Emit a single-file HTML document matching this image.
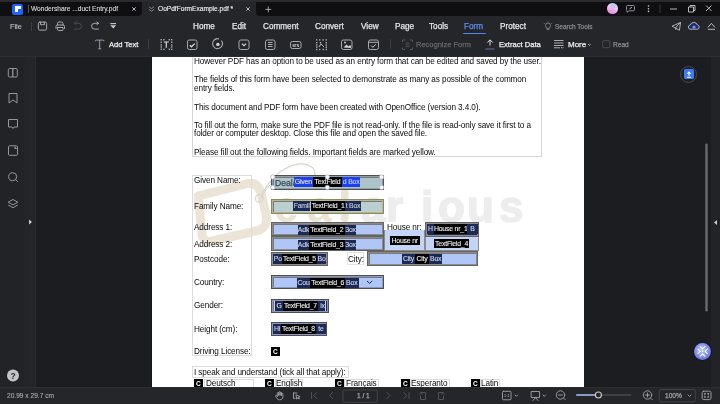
<!DOCTYPE html>
<html><head><meta charset="utf-8"><style>
*{margin:0;padding:0;box-sizing:border-box}
html,body{width:720px;height:404px;overflow:hidden;background:#1b1c20;font-family:"Liberation Sans",sans-serif;position:relative}
.a{position:absolute}
.ui{color:#d8d9dc;white-space:nowrap;line-height:1;will-change:transform;-webkit-text-stroke:0.25px currentColor}
svg{position:absolute;overflow:visible}
.doc{color:#111;font-size:8px;white-space:nowrap;line-height:1;will-change:transform}
</style></head><body>

<!-- title bar -->
<div class="a" style="left:0;top:0;width:720px;height:57px;background:#25262a"></div>
<div class="a" style="left:0;top:0;width:720px;height:1.5px;background:#2b2b2e"></div>
<div class="a" style="left:0;top:1.5px;width:141.5px;height:14.8px;background:#0f0f11;border-radius:0 0 4px 0"></div>
<div class="a" style="left:256px;top:1.5px;width:464px;height:14.8px;background:#0f0f11;border-radius:0 0 0 4px"></div>
<div class="a" style="left:0;top:56px;width:720px;height:1px;background:#2b2c30"></div>

<!-- sidebar -->
<div class="a" style="left:0;top:57px;width:36px;height:330px;background:#222327"></div>
<div class="a" style="left:25px;top:57px;width:10px;height:330px;background:#242529"></div>
<div class="a" style="left:35px;top:57px;width:1px;height:330px;background:#2b2c30"></div>
<!-- doc bg -->
<div class="a" style="left:36px;top:57px;width:675px;height:330px;background:#1c1d21"></div>
<div class="a" style="left:151px;top:57px;width:1px;height:330px;background:#151619"></div>
<!-- right strip -->
<div class="a" style="left:711px;top:57px;width:9px;height:330px;background:#222327"></div>
<!-- page -->
<div class="a" style="left:152px;top:57px;width:432px;height:330px;background:#fff"></div>
<!-- document -->
<div class="a" style="left:152px;top:57px;width:432px;height:330px;overflow:hidden">
<div class="a" style="left:-152px;top:-57px;width:720px;height:404px">
<div class="a" style="left:192px;top:40px;width:350px;height:117px;border:1px solid #d6d6d6"></div>
<div class="a doc" style="left:194.2px;top:57.81px;font-size:8.2px;color:#0a0a0a;letter-spacing:-0.1px;">However PDF has an option to be used as an entry form that can be edited and saved by the user.</div>
<div class="a doc" style="left:194.2px;top:76.06px;font-size:8.2px;color:#0a0a0a;letter-spacing:-0.1px;">The fields of this form have been selected to demonstrate as many as possible of the common</div>
<div class="a doc" style="left:194.2px;top:84.81px;font-size:8.2px;color:#0a0a0a;letter-spacing:-0.1px;">entry fields.</div>
<div class="a doc" style="left:194.2px;top:103.56px;font-size:8.2px;color:#0a0a0a;letter-spacing:-0.1px;">This document and PDF form have been created with OpenOffice (version 3.4.0).</div>
<div class="a doc" style="left:194.2px;top:121.56px;font-size:8.2px;color:#0a0a0a;letter-spacing:-0.1px;">To fill out the form, make sure the PDF file is not read-only. If the file is read-only save it first to a</div>
<div class="a doc" style="left:194.2px;top:130.31px;font-size:8.2px;color:#0a0a0a;letter-spacing:-0.1px;">folder or computer desktop. Close this file and open the saved file.</div>
<div class="a doc" style="left:194.2px;top:149.06px;font-size:8.2px;color:#0a0a0a;letter-spacing:-0.1px;">Please fill out the following fields. Important fields are marked yellow.</div>
<svg style="left:0;top:0" width="720" height="404">
 <g fill="none" stroke="#ece5d7" stroke-linejoin="round">
  <path d="M198 196 L246 184 Q257 181 261 193 L266 214 Q269 228 256 231 L212 241 Q203 243 202 234 Z" stroke-width="9"/>
 </g>
 <circle cx="259.3" cy="198.4" r="3.8" fill="none" stroke="#d8d4cc" stroke-width="1.2"/>
 <path d="M261 196 Q268 182 280 172 Q300 158 313 168 Q318 174 311 182" stroke="#d8d4cc" stroke-width="1.1" fill="none"/>
 <path d="M258 202 Q266 188 276 178" stroke="#d8d4cc" stroke-width="1" fill="none"/>
 <text x="274" y="222" font-family="Liberation Sans" font-weight="bold" font-size="44" fill="#ebe3d3">e</text>
 <text x="307" y="222" font-family="Liberation Sans" font-weight="bold" font-size="44" fill="#ebe3d3">a</text>
 <rect x="341" y="189" width="7.5" height="33" rx="3.5" fill="#ebe3d3"/>
 <text x="361" y="222" font-family="Liberation Sans" font-weight="bold" font-size="44" fill="#ededed" stroke="#ededed" stroke-width="1.5">a</text>
 <text x="386" y="222" font-family="Liberation Sans" font-weight="bold" font-size="44" fill="#ededed" stroke="#ededed" stroke-width="1.5">r</text>
 <text x="421" y="222" font-family="Liberation Sans" font-weight="bold" font-size="44" fill="#ededed" stroke="#ededed" stroke-width="1.5">i</text>
 <text x="438" y="222" font-family="Liberation Sans" font-weight="bold" font-size="44" fill="#ededed" stroke="#ededed" stroke-width="1.5">o</text>
 <text x="467" y="222" font-family="Liberation Sans" font-weight="bold" font-size="44" fill="#ededed" stroke="#ededed" stroke-width="1.5">u</text>
 <text x="499" y="222" font-family="Liberation Sans" font-weight="bold" font-size="44" fill="#ededed" stroke="#ededed" stroke-width="1.5">s</text>
</svg>
<div class="a" style="left:192px;top:175px;width:60px;height:181px;border:1px solid #dcdcdc"></div>
<div class="a doc" style="left:194.2px;top:176.86px;font-size:8.2px;color:#0a0a0a;letter-spacing:-0.1px;">Given Name:</div>
<div class="a doc" style="left:194.2px;top:203.26px;font-size:8.2px;color:#0a0a0a;letter-spacing:-0.1px;">Family Name:</div>
<div class="a doc" style="left:194.2px;top:223.66px;font-size:8.2px;color:#0a0a0a;letter-spacing:-0.1px;">Address 1:</div>
<div class="a doc" style="left:194.2px;top:240.66px;font-size:8.2px;color:#0a0a0a;letter-spacing:-0.1px;">Address 2:</div>
<div class="a doc" style="left:194.2px;top:255.56px;font-size:8.2px;color:#0a0a0a;letter-spacing:-0.1px;">Postcode:</div>
<div class="a doc" style="left:194.2px;top:278.66px;font-size:8.2px;color:#0a0a0a;letter-spacing:-0.1px;">Country:</div>
<div class="a doc" style="left:194.2px;top:302.26px;font-size:8.2px;color:#0a0a0a;letter-spacing:-0.1px;">Gender:</div>
<div class="a doc" style="left:194.2px;top:325.66px;font-size:8.2px;color:#0a0a0a;letter-spacing:-0.1px;">Height (cm):</div>
<div class="a doc" style="left:194.2px;top:348.26px;font-size:8.2px;color:#0a0a0a;letter-spacing:-0.1px;">Driving License:</div>
<div class="a" style="left:192px;top:366px;width:156.5px;height:12px;border:1px solid #dcdcdc"></div>
<div class="a doc" style="left:194.2px;top:368.66px;font-size:8.2px;color:#0a0a0a;letter-spacing:-0.1px;">I speak and understand (tick all that apply):</div>
<div class="a" style="left:194.4px;top:379px;width:9px;height:9px;background:#000"></div>
<div class="a doc" style="left:196.4px;top:380.6px;font-size:6.6px;font-weight:bold;color:#fff">C</div>
<div class="a" style="left:204.2px;top:378.5px;width:50.2px;height:10px;border:1px solid #dcdcdc"></div>
<div class="a doc" style="left:205.7px;top:380.26px;font-size:8.2px;color:#0a0a0a;letter-spacing:-0.1px;">Deutsch</div>
<div class="a" style="left:264.8px;top:379px;width:9px;height:9px;background:#000"></div>
<div class="a doc" style="left:266.8px;top:380.6px;font-size:6.6px;font-weight:bold;color:#fff">C</div>
<div class="a" style="left:274.6px;top:378.5px;width:28.7px;height:10px;border:1px solid #dcdcdc"></div>
<div class="a doc" style="left:276.1px;top:380.26px;font-size:8.2px;color:#0a0a0a;letter-spacing:-0.1px;">English</div>
<div class="a" style="left:335.3px;top:379px;width:9px;height:9px;background:#000"></div>
<div class="a doc" style="left:337.3px;top:380.6px;font-size:6.6px;font-weight:bold;color:#fff">C</div>
<div class="a" style="left:344.4px;top:378.5px;width:34.5px;height:10px;border:1px solid #dcdcdc"></div>
<div class="a doc" style="left:345.9px;top:380.26px;font-size:8.2px;color:#0a0a0a;letter-spacing:-0.1px;">Fran&ccedil;ais</div>
<div class="a" style="left:400.5px;top:379px;width:9px;height:9px;background:#000"></div>
<div class="a doc" style="left:402.5px;top:380.6px;font-size:6.6px;font-weight:bold;color:#fff">C</div>
<div class="a" style="left:409.8px;top:378.5px;width:40.2px;height:10px;border:1px solid #dcdcdc"></div>
<div class="a doc" style="left:411.3px;top:380.26px;font-size:8.2px;color:#0a0a0a;letter-spacing:-0.1px;">Esperanto</div>
<div class="a" style="left:471.4px;top:379px;width:9px;height:9px;background:#000"></div>
<div class="a doc" style="left:473.4px;top:380.6px;font-size:6.6px;font-weight:bold;color:#fff">C</div>
<div class="a" style="left:479.8px;top:378.5px;width:20.7px;height:10px;border:1px solid #dcdcdc"></div>
<div class="a doc" style="left:481.3px;top:380.26px;font-size:8.2px;color:#0a0a0a;letter-spacing:-0.1px;">Latin</div>
<div class="a" style="left:270.8px;top:347px;width:9.4px;height:9px;background:#000"></div>
<div class="a doc" style="left:273px;top:348.6px;font-size:6.6px;font-weight:bold;color:#fff">C</div>
<div class="a" style="left:270.6px;top:175.2px;width:113.4px;height:14.4px;background:#aec4cb;border:1px solid #505050;box-shadow:inset 0 0 0 1px #8ea0a8,inset 1px 1px 0 1px #7a7a7a"></div>
<div class="a doc" style="left:275px;top:179.22px;font-size:8.6px;color:#3a4a50;-webkit-text-stroke:0.25px #3a4a50">Deala</div>
<div class="a doc" style="left:294.2px;top:177px;width:18.6px;height:10px;background:#1c3ff0;color:#e8ecff;font-size:6.9px;line-height:10px;overflow:hidden;text-align:center;letter-spacing:-0.2px;-webkit-text-stroke:0.1px #e8ecff"><span style="display:inline-block;margin:0 -20px">Given</span></div>
<div class="a doc" style="left:312.8px;top:177px;width:28.9px;height:10px;background:#000;color:#f2f2f2;font-size:6.9px;line-height:10px;overflow:hidden;text-align:center;letter-spacing:-0.2px;-webkit-text-stroke:0.1px #f2f2f2"><span style="display:inline-block;margin:0 -20px">TextField</span></div>
<div class="a doc" style="left:341.7px;top:177px;width:18.3px;height:10px;background:#1c3ff0;color:#c8d0ff;font-size:6.9px;line-height:10px;overflow:hidden;text-align:center;letter-spacing:-0.2px;-webkit-text-stroke:0.1px #c8d0ff"><span style="display:inline-block;margin:0 -20px">d Box</span></div>
<svg style="left:0;top:0" width="720" height="404"><circle cx="272.8" cy="177" r="2.2" fill="#fbfcff" stroke="#9fb0d0" stroke-width="0.7"/><circle cx="272.8" cy="187.4" r="2.2" fill="#fbfcff" stroke="#9fb0d0" stroke-width="0.7"/><circle cx="327.3" cy="177" r="2.2" fill="#fbfcff" stroke="#9fb0d0" stroke-width="0.7"/><circle cx="327.3" cy="187.4" r="2.2" fill="#fbfcff" stroke="#9fb0d0" stroke-width="0.7"/><circle cx="381.6" cy="177" r="2.2" fill="#fbfcff" stroke="#9fb0d0" stroke-width="0.7"/><circle cx="381.6" cy="187.4" r="2.2" fill="#fbfcff" stroke="#9fb0d0" stroke-width="0.7"/></svg>
<div class="a" style="left:270.5px;top:198.5px;width:113.3px;height:15.0px;background:#b9cfd0;border:1px solid #8a8766;box-shadow:inset 0 0 0 1px #b8b690,inset 1px 1px 0 1px #7a7a7a"></div>
<div class="a doc" style="left:293.3px;top:201px;width:17.2px;height:10px;background:#1b2a55;color:#c8cede;font-size:6.9px;line-height:10px;overflow:hidden;text-align:center;letter-spacing:-0.2px;-webkit-text-stroke:0.1px #c8cede"><span style="display:inline-block;margin:0 -20px">Famil</span></div>
<div class="a doc" style="left:310.5px;top:201px;width:34.5px;height:10px;background:#000;color:#f2f2f2;font-size:6.9px;line-height:10px;overflow:hidden;text-align:center;letter-spacing:-0.2px;-webkit-text-stroke:0.1px #f2f2f2"><span style="display:inline-block;margin:0 -20px">TextField_1</span></div>
<div class="a doc" style="left:345.0px;top:201px;width:16.0px;height:10px;background:#1b2a55;color:#c8cede;font-size:6.9px;line-height:10px;overflow:hidden;text-align:center;letter-spacing:-0.2px;-webkit-text-stroke:0.1px #c8cede"><span style="display:inline-block;margin:0 -20px">t Box</span></div>
<div class="a" style="left:270.8px;top:222.3px;width:113.2px;height:14.2px;background:#afc6f6;border:1px solid #626262;box-shadow:inset 0 0 0 1px #8c8c8c,inset 1px 1px 0 1px #7a7a7a"></div>
<div class="a doc" style="left:298.3px;top:225px;width:11.0px;height:10px;background:#1b2a55;color:#d6dcf0;font-size:6.9px;line-height:10px;overflow:hidden;text-align:center;letter-spacing:-0.2px;-webkit-text-stroke:0.1px #d6dcf0"><span style="display:inline-block;margin:0 -20px">Adk</span></div>
<div class="a doc" style="left:309.3px;top:225px;width:35.6px;height:10px;background:#000;color:#f2f2f2;font-size:6.9px;line-height:10px;overflow:hidden;text-align:center;letter-spacing:-0.2px;-webkit-text-stroke:0.1px #f2f2f2"><span style="display:inline-block;margin:0 -20px">TextField_2</span></div>
<div class="a doc" style="left:344.9px;top:225px;width:11.2px;height:10px;background:#1b2a55;color:#d6dcf0;font-size:6.9px;line-height:10px;overflow:hidden;text-align:center;letter-spacing:-0.2px;-webkit-text-stroke:0.1px #d6dcf0"><span style="display:inline-block;margin:0 -20px">3ox</span></div>
<div class="a" style="left:270.8px;top:236.3px;width:113.2px;height:14.5px;background:#afc6f6;border:1px solid #626262;box-shadow:inset 0 0 0 1px #8c8c8c,inset 1px 1px 0 1px #7a7a7a"></div>
<div class="a doc" style="left:298.3px;top:239.5px;width:11.0px;height:10px;background:#1b2a55;color:#d6dcf0;font-size:6.9px;line-height:10px;overflow:hidden;text-align:center;letter-spacing:-0.2px;-webkit-text-stroke:0.1px #d6dcf0"><span style="display:inline-block;margin:0 -20px">Adk</span></div>
<div class="a doc" style="left:309.3px;top:239.5px;width:35.6px;height:10px;background:#000;color:#f2f2f2;font-size:6.9px;line-height:10px;overflow:hidden;text-align:center;letter-spacing:-0.2px;-webkit-text-stroke:0.1px #f2f2f2"><span style="display:inline-block;margin:0 -20px">TextField_3</span></div>
<div class="a doc" style="left:344.9px;top:239.5px;width:11.2px;height:10px;background:#1b2a55;color:#d6dcf0;font-size:6.9px;line-height:10px;overflow:hidden;text-align:center;letter-spacing:-0.2px;-webkit-text-stroke:0.1px #d6dcf0"><span style="display:inline-block;margin:0 -20px">3ox</span></div>
<div class="a" style="left:271px;top:251.5px;width:56.8px;height:14.5px;background:#1b2a55;border:1px solid #626262;box-shadow:inset 0 0 0 1px #8c8c8c,inset 1px 1px 0 1px #7a7a7a"></div>
<div class="a doc" style="left:272.5px;top:253.5px;width:9.5px;height:10px;background:#1b2a55;color:#d6dcf0;font-size:6.9px;line-height:10px;overflow:hidden;text-align:center;letter-spacing:-0.2px;-webkit-text-stroke:0.1px #d6dcf0"><span style="display:inline-block;margin:0 -20px">Po</span></div>
<div class="a doc" style="left:282.0px;top:253.5px;width:35.0px;height:10px;background:#000;color:#f2f2f2;font-size:6.9px;line-height:10px;overflow:hidden;text-align:center;letter-spacing:-0.2px;-webkit-text-stroke:0.1px #f2f2f2"><span style="display:inline-block;margin:0 -20px">TextField_5</span></div>
<div class="a doc" style="left:317.0px;top:253.5px;width:9.0px;height:10px;background:#1b2a55;color:#d6dcf0;font-size:6.9px;line-height:10px;overflow:hidden;text-align:center;letter-spacing:-0.2px;-webkit-text-stroke:0.1px #d6dcf0"><span style="display:inline-block;margin:0 -20px">Bo</span></div>
<div class="a" style="left:346.6px;top:252px;width:17.8px;height:13px;border:1px solid #e4e4e4;background:#fff"></div>
<div class="a doc" style="left:348px;top:256.06px;font-size:8.2px;color:#0a0a0a;letter-spacing:-0.1px;">City:</div>
<div class="a" style="left:366.6px;top:251.4px;width:111.9px;height:14.2px;background:#afc6f6;border:1px solid #626262;box-shadow:inset 0 0 0 1px #8c8c8c,inset 1px 1px 0 1px #7a7a7a"></div>
<div class="a doc" style="left:402.2px;top:253.8px;width:13.0px;height:10px;background:#1b2a55;color:#d6dcf0;font-size:6.9px;line-height:10px;overflow:hidden;text-align:center;letter-spacing:-0.2px;-webkit-text-stroke:0.1px #d6dcf0"><span style="display:inline-block;margin:0 -20px">City</span></div>
<div class="a doc" style="left:415.2px;top:253.8px;width:14.0px;height:10px;background:#000;color:#f2f2f2;font-size:6.9px;line-height:10px;overflow:hidden;text-align:center;letter-spacing:-0.2px;-webkit-text-stroke:0.1px #f2f2f2"><span style="display:inline-block;margin:0 -20px">City</span></div>
<div class="a doc" style="left:429.2px;top:253.8px;width:13.4px;height:10px;background:#1b2a55;color:#d6dcf0;font-size:6.9px;line-height:10px;overflow:hidden;text-align:center;letter-spacing:-0.2px;-webkit-text-stroke:0.1px #d6dcf0"><span style="display:inline-block;margin:0 -20px">Box</span></div>
<div class="a" style="left:383.8px;top:222.3px;width:40.8px;height:8.3px;background:#fff"></div>
<div class="a doc" style="left:387.2px;top:223.86px;font-size:8.2px;color:#0a0a0a;letter-spacing:-0.1px;">House nr:</div>
<div class="a" style="left:383.5px;top:230.3px;width:41.8px;height:20.5px;background:#c4d4f6;border:1px solid #8c8c8c;border-top:none"></div>
<div class="a doc" style="left:389.5px;top:235.6px;width:29.5px;height:9.3px;background:#000;color:#f2f2f2;font-size:6.9px;line-height:9.3px;overflow:hidden;text-align:center;letter-spacing:-0.2px;-webkit-text-stroke:0.1px #f2f2f2"><span style="display:inline-block;margin:0 -20px">House nr</span></div>
<div class="a" style="left:425px;top:221.9px;width:53.5px;height:14.7px;background:#1b2a55;border:1px solid #626262;box-shadow:inset 0 0 0 1px #8c8c8c,inset 1px 1px 0 1px #7a7a7a"></div>
<div class="a doc" style="left:426.8px;top:224px;width:7.0px;height:10px;background:#1b2a55;color:#d6dcf0;font-size:6.9px;line-height:10px;overflow:hidden;text-align:center;letter-spacing:-0.2px;-webkit-text-stroke:0.1px #d6dcf0"><span style="display:inline-block;margin:0 -20px">H</span></div>
<div class="a doc" style="left:433.8px;top:224px;width:33.5px;height:10px;background:#000;color:#f2f2f2;font-size:6.9px;line-height:10px;overflow:hidden;text-align:center;letter-spacing:-0.2px;-webkit-text-stroke:0.1px #f2f2f2"><span style="display:inline-block;margin:0 -20px">House nr_1</span></div>
<div class="a doc" style="left:467.3px;top:224px;width:11.0px;height:10px;background:#1b2a55;color:#d6dcf0;font-size:6.9px;line-height:10px;overflow:hidden;text-align:center;letter-spacing:-0.2px;-webkit-text-stroke:0.1px #d6dcf0"><span style="display:inline-block;margin:0 -20px">B</span></div>
<div class="a" style="left:425px;top:236.6px;width:53.5px;height:14px;background:#c4d4f6;border:1px solid #8a8a8a;border-top:none"></div>
<div class="a doc" style="left:434.2px;top:239.4px;width:35.2px;height:9.3px;background:#000;color:#f2f2f2;font-size:6.9px;line-height:9.3px;overflow:hidden;text-align:center;letter-spacing:-0.2px;-webkit-text-stroke:0.1px #f2f2f2"><span style="display:inline-block;margin:0 -20px">TextField_4</span></div>
<div class="a" style="left:271px;top:275.3px;width:112.8px;height:14.2px;background:#afc6f6;border:1px solid #505050;box-shadow:inset 0 0 0 1px #8a98c0,inset 1px 1px 0 1px #7a7a7a"></div>
<div class="a doc" style="left:296.7px;top:277.5px;width:13.0px;height:10px;background:#1b2a55;color:#d6dcf0;font-size:6.9px;line-height:10px;overflow:hidden;text-align:center;letter-spacing:-0.2px;-webkit-text-stroke:0.1px #d6dcf0"><span style="display:inline-block;margin:0 -20px">Cou</span></div>
<div class="a doc" style="left:309.7px;top:277.5px;width:35.5px;height:10px;background:#000;color:#f2f2f2;font-size:6.9px;line-height:10px;overflow:hidden;text-align:center;letter-spacing:-0.2px;-webkit-text-stroke:0.1px #f2f2f2"><span style="display:inline-block;margin:0 -20px">TextField_6</span></div>
<div class="a doc" style="left:345.2px;top:277.5px;width:13.5px;height:10px;background:#1b2a55;color:#d6dcf0;font-size:6.9px;line-height:10px;overflow:hidden;text-align:center;letter-spacing:-0.2px;-webkit-text-stroke:0.1px #d6dcf0"><span style="display:inline-block;margin:0 -20px">Box</span></div>
<svg style="left:0;top:0" width="720" height="404"><path d="M367 281l2.6 2.4 2.6 -2.4" stroke="#1b2a55" stroke-width="1" fill="none"/></svg>
<div class="a" style="left:271px;top:298.6px;width:58.3px;height:14.2px;background:#1b2a55;border:1px solid #505050;box-shadow:inset 0 0 0 1px #8a98c0,inset 1px 1px 0 1px #7a7a7a"></div>
<div class="a" style="left:273.5px;top:301px;width:1px;height:9.5px;background:#c8d0e8"></div>
<div class="a doc" style="left:275.0px;top:300.8px;width:8.0px;height:10px;background:#1b2a55;color:#e0e4f0;font-size:6.9px;line-height:10px;overflow:hidden;text-align:center;letter-spacing:-0.2px;-webkit-text-stroke:0.1px #e0e4f0"><span style="display:inline-block;margin:0 -20px">G</span></div>
<div class="a doc" style="left:283.0px;top:300.8px;width:35.0px;height:10px;background:#000;color:#f2f2f2;font-size:6.9px;line-height:10px;overflow:hidden;text-align:center;letter-spacing:-0.2px;-webkit-text-stroke:0.1px #f2f2f2"><span style="display:inline-block;margin:0 -20px">TextField_7</span></div>
<div class="a doc" style="left:318.0px;top:300.8px;width:9.0px;height:10px;background:#1b2a55;color:#d6dcf0;font-size:6.9px;line-height:10px;overflow:hidden;text-align:center;letter-spacing:-0.2px;-webkit-text-stroke:0.1px #d6dcf0"><span style="display:inline-block;margin:0 -20px">ix</span></div>
<div class="a" style="left:325px;top:301px;width:1px;height:9.5px;background:#c8d0e8"></div>
<div class="a" style="left:271px;top:322px;width:56.3px;height:14.2px;background:#1b2a55;border:1px solid #505050;box-shadow:inset 0 0 0 1px #8a98c0,inset 1px 1px 0 1px #7a7a7a"></div>
<div class="a doc" style="left:272.8px;top:324.2px;width:8.2px;height:10px;background:#1b2a55;color:#d6dcf0;font-size:6.9px;line-height:10px;overflow:hidden;text-align:center;letter-spacing:-0.2px;-webkit-text-stroke:0.1px #d6dcf0"><span style="display:inline-block;margin:0 -20px">Hi</span></div>
<div class="a doc" style="left:281.0px;top:324.2px;width:35.0px;height:10px;background:#000;color:#f2f2f2;font-size:6.9px;line-height:10px;overflow:hidden;text-align:center;letter-spacing:-0.2px;-webkit-text-stroke:0.1px #f2f2f2"><span style="display:inline-block;margin:0 -20px">TextField_8</span></div>
<div class="a doc" style="left:316.0px;top:324.2px;width:10.0px;height:10px;background:#1b2a55;color:#d6dcf0;font-size:6.9px;line-height:10px;overflow:hidden;text-align:center;letter-spacing:-0.2px;-webkit-text-stroke:0.1px #d6dcf0"><span style="display:inline-block;margin:0 -20px">te</span></div>
</div></div>
<!-- status bar -->
<div class="a" style="left:0;top:387px;width:720px;height:17px;background:#25262a"></div>
<div class="a" style="left:0;top:387px;width:720px;height:1px;background:#2c2d31"></div>


<!-- tabs content -->
<div class="a" style="left:12px;top:4px;width:11px;height:11px;background:#1e63ff;border-radius:2.5px"></div>
<div class="a" style="left:14.5px;top:6px;width:6px;height:2.6px;background:#fff"></div>
<div class="a" style="left:14.5px;top:6px;width:3px;height:6px;background:#fff"></div>
<div class="a" style="left:28px;top:5px;width:1px;height:8px;background:#55565a"></div>
<div class="a ui" style="left:31px;top:6.3px;font-size:6.6px;color:#d4d5d8;-webkit-text-stroke:0.12px currentColor">Wondershare ...duct Entry.pdf</div>
<svg style="left:131px;top:6px" width="6" height="6"><path d="M1.3 1.3L4.7 4.7M4.7 1.3L1.3 4.7" stroke="#c9cacd" stroke-width="0.9"/></svg>
<svg style="left:148px;top:6px" width="7" height="6"><path d="M1 0.8L3.5 2.6L6 0.8M1 3.4L3.5 5.2L6 3.4" stroke="#9a9ba0" stroke-width="0.8" fill="none"/></svg>
<div class="a ui" style="left:157.5px;top:6.3px;font-size:6.6px;color:#eeeff2;-webkit-text-stroke:0.12px currentColor">OoPdfFormExample.pdf *</div>
<svg style="left:245px;top:6px" width="6" height="6"><path d="M1.3 1.3L4.7 4.7M4.7 1.3L1.3 4.7" stroke="#c9cacd" stroke-width="0.9"/></svg>
<svg style="left:264px;top:4.5px" width="9" height="9"><path d="M4.3 1.5V7.3M1.4 4.4H7.2" stroke="#c0c1c4" stroke-width="0.8"/></svg>

<!-- window controls -->
<div class="a" style="left:607.4px;top:3.3px;width:10.6px;height:10.6px;border-radius:50%;background:linear-gradient(200deg,#7fe0f5 0%,#f4c8f2 45%,#e56fe0 100%)"></div>
<svg style="left:0;top:0" width="720" height="17"><circle cx="612.7" cy="6.8" r="1.6" fill="none" stroke="#c9a8e0" stroke-width="0.7"/><path d="M609.8 12.5a2.9 3 0 0 1 5.8 0" fill="none" stroke="#c9a8e0" stroke-width="0.7"/></svg>
<svg style="left:0;top:0" width="720" height="17">
 <path d="M627.5 5.5h6a1 1 0 0 1 1 1v3.3a1 1 0 0 1 -1 1h-4.5l-2 1.5v-1.5a1 1 0 0 1 -0.5 -1v-3.3a1 1 0 0 1 1 -1z" stroke="#9a9b9f" stroke-width="0.9" fill="none"/><path d="M629.5 8.8l2.5 -1.5" stroke="#e0e0e0" stroke-width="0.8"/>
 <circle cx="648.5" cy="6" r="0.8" fill="#c8c9cc"/><circle cx="648.5" cy="8.7" r="0.8" fill="#c8c9cc"/><circle cx="648.5" cy="11.4" r="0.8" fill="#c8c9cc"/>
 <path d="M660 4.5V13" stroke="#3a3b3e" stroke-width="1"/>
 <path d="M670 9H677" stroke="#c8c9cc" stroke-width="0.9"/>
 <path d="M688.5 7h5v5h-5z M690 7V5.5h5v5h-1.5" stroke="#c8c9cc" stroke-width="0.9" fill="none"/>
 <path d="M706 5.5l5.5 5.5M711.5 5.5l-5.5 5.5" stroke="#c8c9cc" stroke-width="0.9"/>
</svg>

<!-- menu row -->
<div class="a ui" style="left:9.6px;top:23px;font-size:7.3px;color:#c4c5c9;-webkit-text-stroke:0.1px currentColor">File</div>
<div class="a" style="left:31px;top:22px;width:1px;height:8.5px;background:#3d3e42"></div>
<svg style="left:0;top:0" width="140" height="40">
 <g stroke="#a9aaae" stroke-width="1" fill="none" stroke-linejoin="round" stroke-linecap="round">
  <rect x="38.4" y="22.1" width="8.2" height="8" rx="1.4"/><path d="M40.6 22.1v2.6h3.8v-2.6"/>
  <path d="M57.5 25v-1.5a1.5 1.5 0 0 1 1.5 -1.5h2.5a1.5 1.5 0 0 1 1.5 1.5v1.5 M56 28.5v-2a1.5 1.5 0 0 1 1.5 -1.5h5.5a1.5 1.5 0 0 1 1.5 1.5v2 M57.5 27.5h5.5v2a1 1 0 0 1 -1 1h-3.5a1 1 0 0 1 -1 -1z"/>
 </g>
 <path d="M76 23.3h2.5a2.9 2.9 0 0 1 0 5.8h-4 M74.3 23.3l1.8 -1.3 M74.3 23.3l1.8 1.3" stroke="#4c4d51" stroke-width="1" fill="none" stroke-linecap="round"/>
 <path d="M97.5 23.3h-3a2.9 2.9 0 0 0 0 5.8h4 M98.7 23.3l-1.8 -1.3 M98.7 23.3l-1.8 1.3" stroke="#a9aaae" stroke-width="1" fill="none" stroke-linecap="round"/>
 <path d="M110.3 23.6h5.8" stroke="#c9cacd" stroke-width="1.1"/>
 <path d="M110.3 25.3h5.8l-2.9 3.3z" fill="#c9cacd"/>
</svg>
<div class="a ui" style="left:193px;top:22.5px;font-size:8.2px;color:#e4e5e8;font-weight:normal">Home</div>
<div class="a ui" style="left:231.5px;top:22.5px;font-size:8.2px;color:#e4e5e8">Edit</div>
<div class="a ui" style="left:262.5px;top:22.5px;font-size:8.2px;color:#e4e5e8">Comment</div>
<div class="a ui" style="left:314.5px;top:22.5px;font-size:8.2px;color:#e4e5e8">Convert</div>
<div class="a ui" style="left:360.5px;top:22.5px;font-size:8.2px;color:#e4e5e8">View</div>
<div class="a ui" style="left:394.5px;top:22.5px;font-size:8.2px;color:#e4e5e8">Page</div>
<div class="a ui" style="left:428.5px;top:22.5px;font-size:8.2px;color:#e4e5e8">Tools</div>
<div class="a ui" style="left:463.5px;top:22.5px;font-size:8.2px;color:#5b8ef2">Form</div>
<div class="a" style="left:463px;top:32.5px;width:22.5px;height:1.3px;background:#4d86f0;border-radius:1px"></div>
<div class="a ui" style="left:500px;top:22.5px;font-size:8.2px;color:#e4e5e8">Protect</div>
<svg style="left:0;top:17px" width="720" height="20">
 <path d="M545.5 8.5a2.5 2.5 0 0 1 5 0c0 1.2 -1 1.7 -1 2.8h-3c0 -1.1 -1 -1.6 -1 -2.8z M546.6 12.6h2.8" stroke="#8d8e92" stroke-width="0.8" fill="none"/>
 <path d="M543.8 6l0.9 0.9 M552.2 6l-0.9 0.9 M548 4.5v1" stroke="#8d8e92" stroke-width="0.7"/>
</svg>
<div class="a ui" style="left:554.5px;top:23.5px;font-size:6.5px;color:#86878b">Search Tools</div>
<svg style="left:0;top:17px" width="720" height="20">
 <path d="M672 9.2l8.6 -3.8 -1.2 7.8z M676 10.2l4.6 -4.8 M676 10.2l-0.4 2.2 1.6 -1.3" stroke="#b9babd" stroke-width="0.9" fill="none" stroke-linejoin="round"/>
 <path d="M690 12.2a2.2 2.2 0 0 1 0.3 -4.3a3.7 3.7 0 0 1 7 0a2.2 2.2 0 0 1 0.3 4.3z" stroke="#c0c1c5" stroke-width="0.9" fill="#1c2a6e"/><circle cx="694" cy="10" r="1.6" fill="#7d95e0"/>
 
 <path d="M707.8 10.4l3.6 -4 3.6 4 M707.8 12.3h7.2" stroke="#c8c9cc" stroke-width="0.9" fill="none"/>
</svg>

<!-- tool row -->
<svg style="left:0;top:34px" width="720" height="23">
 <path d="M95.3 7.3q0 -1.2 1.2 -1.2h6.4q1.2 0 1.2 1.2 M99.7 6.1v8.8 M98.2 14.8h3" stroke="#a3a6b8" stroke-width="0.9" fill="none"/>
</svg>
<div class="a ui" style="left:108.8px;top:41px;font-size:7.6px;color:#eeeff2">Add Text</div>
<div class="a" style="left:148px;top:39px;width:1px;height:10px;background:#3d3e42"></div>
</svg>


<!-- tool icons -->
<svg style="left:0;top:0" width="720" height="57">
 <g fill="#a9aaae">
  <rect x="160.5" y="39" width="1.4" height="1.4"/><rect x="163.2" y="39" width="1.4" height="1.4"/><rect x="168.6" y="39" width="1.4" height="1.4"/><rect x="171" y="39" width="1.4" height="1.4"/>
  <rect x="160.5" y="48.6" width="1.4" height="1.4"/><rect x="163.2" y="48.6" width="1.4" height="1.4"/><rect x="168.6" y="48.6" width="1.4" height="1.4"/><rect x="171" y="48.6" width="1.4" height="1.4"/>
  <rect x="160.5" y="41.6" width="1.4" height="1.4"/><rect x="160.5" y="44.2" width="1.4" height="1.4"/><rect x="160.5" y="46.3" width="1.4" height="1.4"/>
  <rect x="171" y="41.6" width="1.4" height="1.4"/><rect x="171" y="44.2" width="1.4" height="1.4"/><rect x="171" y="46.3" width="1.4" height="1.4"/>
 </g>
 <path d="M163.8 42h5 M166.3 42v5.8" stroke="#d8d9dc" stroke-width="1.2" fill="none"/>
 <rect x="187.5" y="40" width="9.5" height="9.5" rx="1.8" stroke="#a9aaae" stroke-width="1" fill="none"/>
 <path d="M189.8 45.2l1.7 1.6 3.2 -3.2" stroke="#d8d9dc" stroke-width="1.3" fill="none"/>
 <path d="M221.4 40.5a5 5 0 1 1 -2.4 -1.6" stroke="#a9aaae" stroke-width="1.1" fill="none"/>
 <circle cx="217.9" cy="44.4" r="1.7" fill="#d8d9dc"/>
 <rect x="239" y="40" width="10" height="9.5" rx="1.8" stroke="#a9aaae" stroke-width="1" fill="none"/>
 <path d="M241.9 43.6l2.1 2.1 2.1 -2.1" stroke="#d8d9dc" stroke-width="1.1" fill="none"/>
 <rect x="265.5" y="40" width="9.5" height="9.5" rx="1.8" stroke="#a9aaae" stroke-width="1" fill="none"/>
 <path d="M268 42.5h4.5 M268 44.5h4.5 M268 46.5h4.5" stroke="#d0d1d4" stroke-width="0.8"/>
 <rect x="290.5" y="41.5" width="10.5" height="7" rx="1.8" stroke="#a9aaae" stroke-width="1" fill="none"/>
 <text x="295.8" y="46.6" font-size="3.2" font-family="Liberation Sans" font-weight="bold" fill="#d0d1d4" text-anchor="middle">BTN</text>
 <g fill="#a9aaae">
  <rect x="316" y="39.2" width="1.4" height="1.4"/><rect x="319" y="39.2" width="1.4" height="1.4"/><rect x="322.5" y="39.2" width="1.4" height="1.4"/><rect x="325.6" y="39.2" width="1.4" height="1.4"/>
  <rect x="316" y="48.8" width="1.4" height="1.4"/><rect x="319" y="48.8" width="1.4" height="1.4"/><rect x="322.5" y="48.8" width="1.4" height="1.4"/><rect x="325.6" y="48.8" width="1.4" height="1.4"/>
  <rect x="316" y="42" width="1.4" height="1.4"/><rect x="316" y="44.3" width="1.4" height="1.4"/><rect x="316" y="46.5" width="1.4" height="1.4"/>
  <rect x="325.6" y="42" width="1.4" height="1.4"/><rect x="325.6" y="44.3" width="1.4" height="1.4"/><rect x="325.6" y="46.5" width="1.4" height="1.4"/>
 </g>
 <path d="M318.8 47l2.2 -3 1.5 1.5 1.5 1.5" stroke="#d0d1d4" stroke-width="0.9" fill="none"/>
 <circle cx="320.5" cy="42.8" r="0.8" fill="#d0d1d4"/>
 <rect x="341.5" y="40" width="10.5" height="9.5" rx="1.8" stroke="#a9aaae" stroke-width="1" fill="none"/>
 <path d="M343.5 47.5l3 -3 2 2 1.5 -1.5 1 1 v2z" fill="#d0d1d4"/>
 <circle cx="345" cy="42.5" r="0.9" fill="#d0d1d4"/>
 <rect x="368.5" y="40" width="10" height="9.5" rx="1.8" stroke="#a9aaae" stroke-width="1" fill="none"/>
 <path d="M368.5 42.3h10" stroke="#a9aaae" stroke-width="1"/>
 <path d="M371 45.5l1.8 1.8 3 -3" stroke="#d0d1d4" stroke-width="1" fill="none"/>
 <path d="M390.5 39v10" stroke="#3a3b3f" stroke-width="1"/>
 <path d="M402.5 42v-2h2.5 M410 40h2.5v2 M412.5 47.5v2h-2.5 M405 49.5h-2.5v-2" stroke="#55565a" stroke-width="1" fill="none"/>
 <path d="M405.5 43h4 M405.5 44.8h4 M405.5 46.6h4" stroke="#55565a" stroke-width="0.8"/>
 <path d="M490 45.5v-5.5 M487.3 42.5l2.7 -2.7 2.7 2.7" stroke="#e0e1e4" stroke-width="1" fill="none"/>
 <path d="M485.3 49h9.2" stroke="#5a6a98" stroke-width="1.1"/>
 <path d="M554 40.5h9.5 M554 43h9.5 M554 45.5h9.5 M554 47.8h6" stroke="#b9babd" stroke-width="0.9"/>
 <path d="M561 47l1.3 1.3 1.3 -1.3" stroke="#b9babd" stroke-width="0.8" fill="none"/>
 <path d="M588 44l1.4 1.4 1.4 -1.4" stroke="#d0d1d4" stroke-width="0.8" fill="none"/>
 <rect x="602.7" y="40.7" width="7.2" height="7" rx="1" stroke="#4e4f53" stroke-width="0.9" fill="none"/>
</svg>
<div class="a ui" style="left:416.4px;top:40.7px;font-size:7.5px;color:#65666a">Recognize Form</div>
<div class="a ui" style="left:498.7px;top:40.5px;font-size:7.6px;color:#eeeff2">Extract Data</div>
<div class="a ui" style="left:567.8px;top:41px;font-size:8px;color:#eeeff2">More</div>
<div class="a ui" style="left:613px;top:42.2px;font-size:6.6px;color:#8a8b8f">Read</div>


<!-- sidebar icons -->
<svg style="left:0;top:0" width="36" height="404">
 <g stroke="#96979b" stroke-width="1" fill="none">
  <rect x="8.3" y="68.5" width="9" height="8.5" rx="1.2"/><path d="M12.8 68.5v8.5" stroke-width="1.3"/>
  <path d="M9 93.5h8v9.5l-4 -3 -4 3z" stroke-linejoin="round"/>
  <path d="M8.5 119.5h9v7.5h-3.5l-1 1.5 -1 -1.5h-3.5z" stroke-linejoin="round"/>
  <rect x="8.5" y="145.8" width="9" height="9.5" rx="1"/>
  <circle cx="12.7" cy="176.7" r="4"/><path d="M15.6 179.6l2.2 2.2"/>
  <path d="M13 199.5l4.8 2.7 -4.8 2.7 -4.8 -2.7z M8.2 205l4.8 2.7 4.8 -2.7" stroke-linejoin="round"/>
 </g>
 <path d="M14.5 146v3h2.7z" fill="#96979b"/>
 <path d="M29 219.5l3 2.5 -3 2.5z" fill="#c9cacd"/>
 <circle cx="13" cy="375.5" r="6" fill="#c3c4c8"/>
 <text x="13" y="378.6" font-size="8.5" font-weight="bold" font-family="Liberation Sans" text-anchor="middle" fill="#26272b">?</text>
</svg>


<!-- right side -->
<div class="a" style="left:680.2px;top:65.5px;width:17px;height:17px;border-radius:50%;background:#1f2024;border:1px solid #48494e"></div>
<div class="a" style="left:684px;top:69.2px;width:9.6px;height:9.6px;border-radius:1.5px;background:#3d7bf5"></div>
<svg style="left:0;top:0" width="720" height="404">
 <path d="M686.6 73.8l2.4 -2.6 2.4 2.6z" fill="#fff"/><path d="M689 73.5v2.2 M686.9 77.3h4.2" stroke="#fff" stroke-width="1.1" fill="none"/>
 <rect x="705.3" y="143.5" width="2.4" height="168" rx="1.2" fill="#6a6b70"/>
 <path d="M717 220l-3 2.5 3 2.5z" fill="#c9cacd"/>
</svg>
<div class="a" style="left:694px;top:342.8px;width:17.2px;height:17.2px;border-radius:50%;background:radial-gradient(circle at 45% 40%,#bccaff 0%,#8494f0 45%,#4f55d8 100%);box-shadow:0 0 0 1px #15162a"></div>
<svg style="left:0;top:0" width="720" height="404">
 <g stroke="#ffffff" stroke-width="1.2" fill="none" stroke-linecap="round" stroke-linejoin="round" opacity="0.95">
  <path d="M700.3 346.6l2.3 2.2 2.3 -2.2 M700.3 356.2l2.3 -2.2 2.3 2.2 M697.9 349.1l2.2 2.3 -2.2 2.3 M707.3 349.1l-2.2 2.3 2.2 2.3"/>
 </g>
 <circle cx="702.6" cy="351.4" r="0.8" fill="#fff"/>
</svg>

<!-- status bar -->
<div class="a ui" style="left:6.7px;top:393.3px;font-size:6.6px;color:#a9aaae;-webkit-text-stroke:0.1px currentColor">20.99 x 29.7 cm</div>
<svg style="left:0;top:0" width="720" height="404">
 <g stroke="#9fa0a4" stroke-width="0.9" fill="none" stroke-linecap="round" stroke-linejoin="round">
  <path d="M277.3 396.5v-3.2a0.7 0.7 0 0 1 1.4 0v2 M278.7 395v-2.6a0.7 0.7 0 0 1 1.4 0v2.6 M280.1 395v-2.2a0.7 0.7 0 0 1 1.4 0v2.6 M281.5 395.4v-1.4a0.7 0.7 0 0 1 1.4 0v2.8c0 1.8 -1.3 3 -3 3h-0.5c-1.3 0 -2.1 -0.8 -2.9 -2l-1 -1.6a0.7 0.7 0 0 1 1.1 -0.7l0.7 0.6"/>
  <path d="M293.5 393h3.5 M293.5 393v5.5h1.5 M296.3 395l3.8 1.6 -1.7 0.5 1.2 1.5 -0.6 0.5 -1.2 -1.5 -0.9 1.3z"/>
 </g>
 <g stroke="#55565a" stroke-width="0.9" fill="none">
  <path d="M311.5 392.3v6.6 M317 392.3l-3.2 3.3 3.2 3.3"/>
  <path d="M333 392l-3.5 3.5 3.5 3.5"/>
  <path d="M386.5 392l3.5 3.5 -3.5 3.5"/>
  <path d="M403.5 392.3l3.2 3.3 -3.2 3.3 M409 392.3v6.6"/>
  <path d="M421 392.5h4.5v7h-5v-4 M419.5 394.5l1.5 -2 1.5 2"/>
  <path d="M443 392.5h-4.5v7h5v-4 M444.5 394.5l-1.5 -2 -1.5 2"/>
 </g>
 <rect x="343" y="390" width="34.3" height="12.3" rx="1.5" stroke="#45464a" stroke-width="0.9" fill="none"/>
 <g stroke="#a3a4a8" stroke-width="0.9" fill="none" stroke-linecap="round">
  <rect x="502.5" y="391.3" width="8.5" height="8.5" rx="1"/>
  <path d="M515 395l1.3 1.3 1.3 -1.3 M543 395l1.3 1.3 1.3 -1.3 M688 395l1.5 1.5 1.5 -1.5"/>
  <path d="M531.5 391.5h8v6h-8z M533 400.5l2.5 -3 2.5 3 M535.5 397.5v0"/>
  <circle cx="560.5" cy="395" r="4.2"/><path d="M558.5 395h4 M563.5 398l1.8 1.8"/>
  <circle cx="647.5" cy="395" r="4.2"/><path d="M645.5 395h4 M647.5 393v4 M650.5 398l1.8 1.8"/>
  <rect x="702.2" y="391.2" width="8.8" height="8.4" rx="1.5"/></g><g fill="#a9aaae"><path d="M704 393l2.3 0.6 -1.7 1.7z M709.2 393l-0.6 2.3 -1.7 -1.7z M704 397.8l0.6 -2.3 1.7 1.7z M709.2 397.8l-2.3 -0.6 1.7 -1.7z"/>
 </g>
 <text x="506.7" y="397.3" font-size="3.8" font-family="Liberation Sans" fill="#b9babd" text-anchor="middle">1:1</text>
 <rect x="576" y="394" width="55.5" height="2" rx="1" fill="#3e3f44"/>
 <rect x="576" y="394" width="22.5" height="2" rx="1" fill="#8e99c2"/>
 <circle cx="598.4" cy="395" r="3" fill="#25262a" stroke="#c9cacd" stroke-width="1.1"/>
 <rect x="659.3" y="389.5" width="36" height="12.4" rx="1.5" stroke="#45464a" stroke-width="0.9" fill="none"/>
</svg>
<div class="a ui" style="left:356.5px;top:393px;font-size:6.5px;color:#a0a1a5">1 / 1</div>
<div class="a ui" style="left:664.5px;top:392.8px;font-size:6.6px;color:#a0a1a5">100%</div>

</body></html>
